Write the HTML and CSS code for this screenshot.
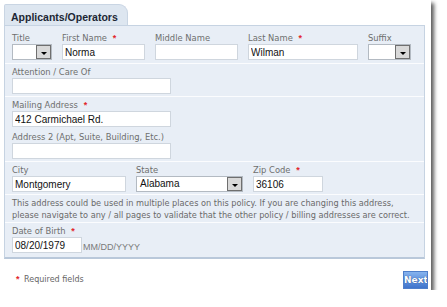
FILE: index.html
```html
<!DOCTYPE html>
<html lang="en">
<head>
  <meta charset="UTF-8">
  <title>Applicants/Operators</title>
  <link rel="stylesheet" href="styles.css">
</head>
<body>
  <div class="card">
    <div class="tab">Applicants/Operators</div>

    <div class="panel">
      <div class="row row-top">
        <div class="field w-title">
          <div class="label">Title</div>
          <div class="select"><span class="select-value"></span><span class="select-btn"><span class="arrow"></span></span></div>
        </div>
        <div class="field w-name">
          <div class="label">First Name <span class="req">*</span></div>
          <input class="input" type="text" value="Norma">
        </div>
        <div class="field w-name">
          <div class="label">Middle Name</div>
          <input class="input" type="text" value="">
        </div>
        <div class="field w-last">
          <div class="label">Last Name <span class="req">*</span></div>
          <input class="input" type="text" value="Wilman">
        </div>
        <div class="field w-suffix">
          <div class="label">Suffix</div>
          <div class="select"><span class="select-value"></span><span class="select-btn"><span class="arrow"></span></span></div>
        </div>
      </div>

      <div class="row">
        <div class="field w-wide">
          <div class="label">Attention / Care Of</div>
          <input class="input" type="text" value="">
        </div>
      </div>

      <div class="row row-stack">
        <div class="field w-wide">
          <div class="label">Mailing Address <span class="req">*</span></div>
          <input class="input" type="text" value="412 Carmichael Rd.">
        </div>
        <div class="field w-wide">
          <div class="label">Address 2 (Apt, Suite, Building, Etc.)</div>
          <input class="input" type="text" value="">
        </div>
      </div>

      <div class="row">
        <div class="field w-city">
          <div class="label">City</div>
          <input class="input" type="text" value="Montgomery">
        </div>
        <div class="field w-state">
          <div class="label">State</div>
          <div class="select"><span class="select-value">Alabama</span><span class="select-btn"><span class="arrow"></span></span></div>
        </div>
        <div class="field w-zip">
          <div class="label">Zip Code <span class="req">*</span></div>
          <input class="input" type="text" value="36106">
        </div>
      </div>

      <div class="row notice">
        This address could be used in multiple places on this policy. If you are changing this address,<br>
        please navigate to any / all pages to validate that the other policy / billing addresses are correct.
      </div>

      <div class="row row-last">
        <div class="field">
          <div class="label">Date of Birth <span class="req">*</span></div>
          <div class="dob">
            <input class="input w-dob" type="text" value="08/20/1979">
            <span class="hint">MM/DD/YYYY</span>
          </div>
        </div>
      </div>
    </div>

    <div class="footer">
      <div class="required"><span class="req">*</span> Required fields</div>
      <button class="next-button" type="button">Next</button>
    </div>
  </div>
</body>
</html>
```

FILE: styles.css
```css
* {
  margin: 0;
  padding: 0;
  box-sizing: border-box;
}

body {
  background: #ffffff;
  font-family: 'DejaVu Sans', Verdana, sans-serif;
}

.card {
  width: 431px;
  height: 290px;
  background: #ffffff;
  padding: 4px 6px 0 4px;
  box-shadow: 3px 3px 4px rgba(0, 0, 0, 0.65);
  display: flex;
  flex-direction: column;
}

.tab {
  width: 124px;
  height: 21px;
  padding: 6px 0 0 6px;
  background: #dde6f0;
  border: 1px solid #c9d5e3;
  border-bottom: none;
  border-radius: 2px 9px 0 0;
  font-family: 'Liberation Sans', Arial, sans-serif;
  font-size: 10.5px;
  font-weight: bold;
  color: #1c2634;
  line-height: 12px;
}

.panel {
  background: #e8eef6;
  border: 1px solid #c6d3e2;
  border-bottom: 2px solid #b9c8da;
}

.row {
  display: flex;
  gap: 10px;
  padding: 2px 8px 2px 7px;
  border-bottom: 1px solid #fbfcfe;
}

.row-top {
  padding-top: 6px;
  padding-bottom: 3px;
}

.row-stack {
  flex-direction: column;
  gap: 4px;
}

.row-last {
  border-bottom: none;
  padding-bottom: 4px;
}

.label {
  font-size: 8.4px;
  line-height: 12px;
  height: 12px;
  color: #6e6e6e;
  white-space: nowrap;
}

.req {
  color: #e2262b;
  font-family: 'Liberation Sans', Arial, sans-serif;
  font-weight: bold;
  font-size: 9px;
  margin-left: 3px;
}

.input {
  display: block;
  width: 100%;
  height: 16px;
  border: 1px solid #cfd6de;
  background: #ffffff;
  padding: 0 2px;
  font-family: 'Liberation Sans', Arial, sans-serif;
  font-size: 10px;
  color: #111111;
  outline: none;
}

.w-title { width: 40px; }
.w-name { width: 83px; }
.w-last { width: 110px; }
.w-suffix { width: 43px; }
.w-wide { width: 159px; }
.w-city { width: 114px; }
.w-state { width: 107px; }
.w-zip { width: 70px; }

.select {
  display: flex;
  height: 16px;
  background: #ffffff;
  border: 1px solid #b3bac2;
}

.select-value {
  flex: 1;
  padding-left: 3px;
  font-family: 'Liberation Sans', Arial, sans-serif;
  font-size: 10px;
  line-height: 14px;
  color: #111111;
}

.select-btn {
  width: 15px;
  background: #d9d9d9;
  border: 1px solid #6f6f6f;
  display: flex;
  align-items: center;
  justify-content: center;
}

.arrow {
  width: 0;
  height: 0;
  margin-top: 2px;
  border-left: 3px solid transparent;
  border-right: 3px solid transparent;
  border-top: 3px solid #000000;
}

.notice {
  display: block;
  padding: 2px 7px 1px 7px;
  font-size: 8.2px;
  line-height: 12px;
  color: #6a6a6a;
  white-space: nowrap;
}

.dob {
  display: flex;
  align-items: flex-end;
}

.w-dob {
  width: 70px;
}

.hint {
  margin-left: 1px;
  font-family: 'Liberation Sans', Arial, sans-serif;
  font-size: 9px;
  line-height: 11px;
  color: #7a7a7a;
}

.footer {
  flex: 1;
  display: flex;
  justify-content: space-between;
  align-items: flex-end;
  padding: 0 0 1px 12px;
}

.required {
  margin-bottom: 3px;
  font-size: 8px;
  line-height: 12px;
  color: #666666;
}

.required .req {
  margin-left: 0;
  margin-right: 2px;
}

.next-button {
  width: 25px;
  height: 18px;
  margin-right: -3px;
  border: 1px solid #4f7fca;
  background: linear-gradient(#86b3ee, #3f74cc);
  color: #ffffff;
  font-family: 'DejaVu Sans', Verdana, sans-serif;
  font-size: 9px;
  font-weight: bold;
  text-shadow: 0 0 1px #1d3f7a;
  overflow: hidden;
  cursor: pointer;
}
```
